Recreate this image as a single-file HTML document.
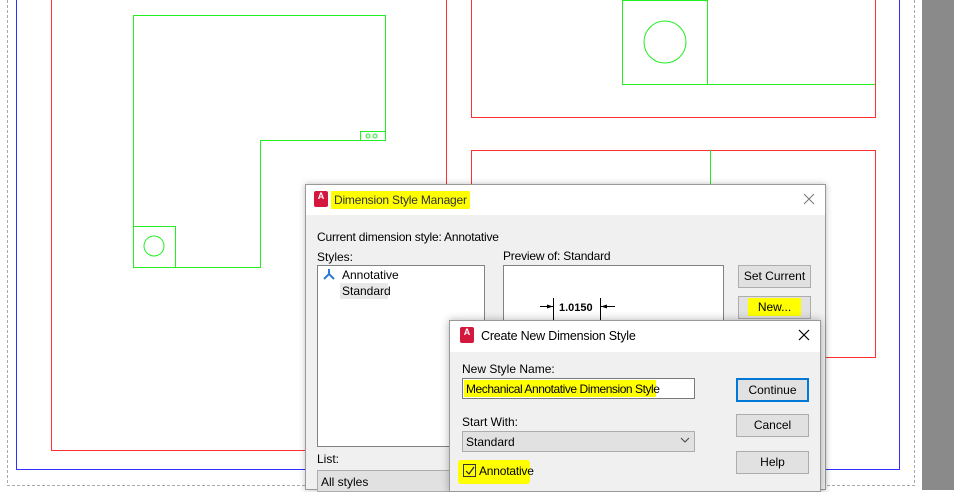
<!DOCTYPE html>
<html><head><meta charset="utf-8"><style>
*{margin:0;padding:0;box-sizing:border-box}
body{width:954px;height:490px;overflow:hidden;background:#fff;position:relative;font-family:"Liberation Sans",sans-serif;font-size:12px;color:#000}
.a{position:absolute}
.t{position:absolute;white-space:nowrap;font-size:12px;line-height:14px}
.btn{position:absolute;background:#e1e1e1;border:1px solid #adadad;text-align:center;font-size:12px;line-height:20px}
.hl{background:#ffff00}
</style></head><body>
<svg class="a" style="left:0;top:0" width="954" height="490">
<rect x="922" y="0" width="32" height="490" fill="#8a8a8a"/>
<line x1="7.5" y1="0" x2="7.5" y2="485" stroke="#aaa" stroke-dasharray="3,2"/>
<line x1="914.5" y1="0" x2="914.5" y2="485" stroke="#aaa" stroke-dasharray="3,2"/>
<line x1="7" y1="485.5" x2="915" y2="485.5" stroke="#aaa" stroke-dasharray="3,2"/>
<line x1="16.5" y1="0" x2="16.5" y2="470" stroke="#3030ff"/>
<line x1="899.5" y1="0" x2="899.5" y2="470" stroke="#3030ff"/>
<line x1="16" y1="469.5" x2="900" y2="469.5" stroke="#3030ff"/>
<g stroke="#ff3030" fill="none" stroke-width="1">
<line x1="51.5" y1="0" x2="51.5" y2="451"/>
<line x1="446.5" y1="0" x2="446.5" y2="451"/>
<line x1="51" y1="450.5" x2="447" y2="450.5"/>
<path d="M471.5 0V117.5H875.5V0"/>
<rect x="471.5" y="150.5" width="404" height="207"/>
</g>
<g stroke="#22ee22" fill="none" stroke-width="1">
<path d="M133.5 15.5H385.5V140.5H260.5V267.5H133.5Z"/>
<rect x="360.5" y="131.5" width="25" height="9"/>
<circle cx="368" cy="136" r="2"/><circle cx="375" cy="136" r="2"/>
<rect x="133.5" y="226.5" width="42" height="41"/>
<circle cx="154" cy="246" r="10"/>
<rect x="622.5" y="0.5" width="85" height="84"/>
<circle cx="665" cy="42" r="21"/>
<line x1="707" y1="84.5" x2="875" y2="84.5"/>
<line x1="710.5" y1="150" x2="710.5" y2="186"/>
</g>
</svg>

<!-- Dialog 1 -->
<div class="a" style="left:305px;top:184px;width:521px;height:306px;background:#f0f0f0;border:1px solid #999;box-shadow:0 0 6px rgba(0,0,0,.25)"></div>
<div class="a" style="left:306px;top:185px;width:519px;height:30px;background:#fff"></div>
<div class="a" style="left:314px;top:191px;width:14px;height:16px;background:#d4183d;border-radius:2px;color:#fff;font-size:9px;font-weight:bold;text-align:center;line-height:11px">A</div>
<div class="a hl" style="left:331px;top:191px;width:139px;height:18px"></div>
<div class="t" style="left:334px;top:193px;font-size:12px;color:#333;letter-spacing:-0.2px">Dimension Style Manager</div>
<svg class="a" style="left:803px;top:193px" width="12" height="12"><path d="M1 1L11 11M11 1L1 11" stroke="#777" stroke-width="1"/></svg>
<div class="t" style="left:317px;top:230px;letter-spacing:-0.2px">Current dimension style: Annotative</div>
<div class="t" style="left:317px;top:250px">Styles:</div>
<div class="t" style="left:503px;top:249px;letter-spacing:-0.2px">Preview of: Standard</div>
<div class="a" style="left:317px;top:265px;width:168px;height:182px;background:#fff;border:1px solid #828282"></div>
<svg class="a" style="left:323px;top:268px" width="12" height="12"><path d="M6 1V6L1 11M6 6L11 11" stroke="#2a7ad6" stroke-width="2" fill="none"/></svg>
<div class="t" style="left:342px;top:268px">Annotative</div>
<div class="a" style="left:340px;top:283px;width:48px;height:16px;background:#e8e8e8"></div>
<div class="t" style="left:342px;top:284px">Standard</div>
<div class="a" style="left:503px;top:265px;width:221px;height:70px;background:#fff;border:1px solid #828282"></div>
<svg class="a" style="left:535px;top:295px" width="85" height="25">
<line x1="5" y1="11.5" x2="18" y2="11.5" stroke="#000"/><path d="M12 9.5L18 11.5L12 13.5Z"/>
<line x1="18.5" y1="3" x2="18.5" y2="25" stroke="#000"/>
<line x1="65.5" y1="3" x2="65.5" y2="25" stroke="#000"/>
<line x1="66" y1="11.5" x2="80" y2="11.5" stroke="#000"/><path d="M72 9.5L66 11.5L72 13.5Z"/>
<text x="24" y="16" font-family="Liberation Sans" font-weight="bold" font-size="11">1.0150</text>
</svg>
<div class="btn" style="left:738px;top:265px;width:73px;height:23px">Set Current</div>
<div class="btn" style="left:738px;top:296px;width:73px;height:23px"><span class="hl" style="padding:2px 10px">New...</span></div>
<div class="t" style="left:317px;top:452px">List:</div>
<div class="a" style="left:317px;top:470px;width:140px;height:22px;background:#e1e1e1;border:1px solid #adadad"></div>
<div class="t" style="left:321px;top:475px">All styles</div>

<!-- Dialog 2 -->
<div class="a" style="left:449px;top:320px;width:372px;height:172px;background:#f0f0f0;border:1px solid #999;box-shadow:0 0 8px rgba(0,0,0,.3)"></div>
<div class="a" style="left:450px;top:321px;width:370px;height:31px;background:#fff"></div>
<div class="a" style="left:460px;top:327px;width:14px;height:16px;background:#d4183d;border-radius:2px;color:#fff;font-size:9px;font-weight:bold;text-align:center;line-height:11px">A</div>
<div class="t" style="left:481px;top:329px;font-size:12.5px;letter-spacing:-0.2px">Create New Dimension Style</div>
<svg class="a" style="left:798px;top:329px" width="12" height="12"><path d="M1 1L11 11M11 1L1 11" stroke="#000" stroke-width="1.2"/></svg>
<div class="t" style="left:462px;top:362px">New Style Name:</div>
<div class="a" style="left:462px;top:378px;width:233px;height:21px;background:#fff;border:1px solid #7a7a7a"></div>
<div class="a hl" style="left:464px;top:380px;width:192px;height:17px"></div>
<div class="t" style="left:466px;top:382px;letter-spacing:-0.45px">Mechanical Annotative Dimension Style</div>
<div class="btn" style="left:736px;top:378px;width:73px;height:24px;border:2px solid #0078d7;line-height:20px">Continue</div>
<div class="t" style="left:462px;top:415px">Start With:</div>
<div class="a" style="left:462px;top:431px;width:233px;height:21px;background:#e1e1e1;border:1px solid #adadad"></div>
<div class="t" style="left:466px;top:435px">Standard</div>
<svg class="a" style="left:680px;top:437px" width="10" height="7"><path d="M1 1L5 5L9 1" stroke="#444" fill="none"/></svg>
<div class="btn" style="left:736px;top:414px;width:73px;height:23px">Cancel</div>
<div class="btn" style="left:736px;top:451px;width:73px;height:23px">Help</div>
<div class="a hl" style="left:458px;top:460px;width:72px;height:24px;border-radius:3px"></div>
<div class="a" style="left:463px;top:464px;width:13px;height:13px;border:1px solid #333;background:#ffff00"></div>
<svg class="a" style="left:465px;top:466px" width="10" height="10"><path d="M1 5L4 8L9 1" stroke="#222" fill="none" stroke-width="1.2"/></svg>
<div class="t" style="left:479px;top:464px;letter-spacing:-0.2px">Annotative</div>
</body></html>
